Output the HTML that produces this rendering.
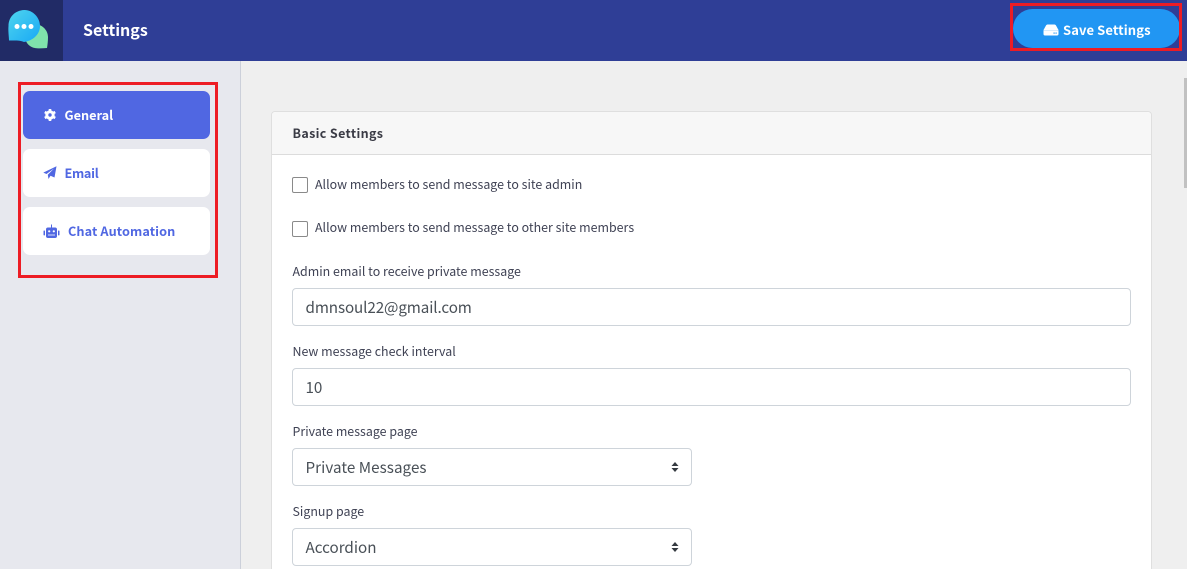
<!DOCTYPE html>
<html><head><meta charset="utf-8">
<style>
html,body{margin:0;padding:0;width:1187px;height:569px;overflow:hidden;background:#efefef;font-family:"DejaVu Sans","Liberation Sans",sans-serif;}
#p{position:relative;width:1187px;height:569px;overflow:hidden;background:#efefef;}
.a{position:absolute;white-space:nowrap;}
.t{font-family:"Noto Sans CJK JP","Liberation Sans",sans-serif;}
.lbl{font-size:12.4px;color:#3f4254;line-height:16px;letter-spacing:.02px;}
.inp{left:292px;height:36px;border:1px solid #ced4da;border-radius:4px;background:#fff;box-sizing:content-box;}
.val{left:305.500px;font-size:15.2px;color:#495057;line-height:20px;}
.nav{left:23px;width:187px;height:48px;border-radius:7px;background:#fff;}
.navt{font-size:12.7px;font-weight:700;color:#5067e2;line-height:18px;}
.cb{left:292px;width:14px;height:14px;border:1px solid #8a8a8a;border-radius:2px;background:#fff;}
.red{border:3px solid #ed1c24;box-sizing:border-box;}
</style></head><body><div id="p">
<div class="a" style="left:0;top:0;width:1187px;height:61px;background:#2f3e96"></div>
<div class="a" style="left:0;top:0;width:63px;height:61px;background:#212b66"></div>
<svg class="a" style="left:0;top:0" width="63" height="61" viewBox="0 0 63 61">
<defs><linearGradient id="g" x1="0" y1="0" x2="1" y2="1"><stop offset="0" stop-color="#4fd5ee"/><stop offset="1" stop-color="#18a8f5"/></linearGradient></defs>
<path d="M28 25C38 21 48 28 48 37C48 41 47.500 45 47 48C40 48.500 34 49 30 46C24 42 22 30 28 25Z" fill="#7fe3ac"/>
<path d="M24 10C32 9.500 40 17 40 26C40 35 32 41 24 42C20 40 14 40.500 9 40.500C9 37 8 31 8.500 26C8.500 17 15 10.500 24 10Z" fill="url(#g)"/>
<circle cx="17" cy="26.500" r="2.500" fill="#fff"/><circle cx="24" cy="26.500" r="2.500" fill="#fff"/><circle cx="31" cy="26.500" r="2.500" fill="#fff"/>
</svg>
<div class="a t" style="left:83px;top:19px;font-size:16px;font-weight:700;color:#fff;line-height:20px;">Settings</div>
<div class="a" style="left:1013px;top:9px;width:167px;height:39px;border-radius:20px;background:#2196f3"></div>
<div class="a red" style="left:1010px;top:3px;width:172px;height:48px;"></div>
<svg class="a" style="left:1043px;top:24px" width="16" height="12" viewBox="0 0 16 12">
<path d="M0.500 6L3 1.500C3.300 1 3.800 .5 4.500 .5H11.500C12.200 .5 12.700 1 13 1.500L15.500 6V10C15.500 11 15 11.500 14 11.500H2C1 11.500 .5 11 .5 10Z" fill="#fff"/>
<rect x="0.500" y="6" width="15" height="0.800" fill="#cfe6fb"/><rect x="10.500" y="8.500" width="1.200" height="1.200" fill="#2196f3"/><rect x="12.500" y="8.500" width="1.200" height="1.200" fill="#2196f3"/></svg>
<div class="a t" style="left:1063px;top:21px;font-size:13px;font-weight:700;color:#fff;line-height:18px;letter-spacing:.1px;">Save Settings</div>

<div class="a" style="left:0;top:61px;width:240px;height:508px;background:#e7e8ee;border-right:1px solid #ccd0da"></div>
<div class="a nav" style="top:91px;background:#5067e2"></div>
<div class="a nav" style="top:149px"></div>
<div class="a nav" style="top:207px"></div>
<div class="a red" style="left:18px;top:82px;width:200px;height:196px;"></div>

<svg class="a" style="left:43px;top:108px" width="14" height="14" viewBox="0 0 14 14">
<path d="M7 3.800A3.200 3.200 0 1 0 7 10.200A3.200 3.200 0 1 0 7 3.800Z" fill="none" stroke="#fff" stroke-width="3"/>
<path d="M7 1V3M7 11V13M1.800 4L3.500 5M10.500 9L12.200 10M1.800 10L3.500 9M10.500 5L12.200 4" stroke="#fff" stroke-width="2.600"/></svg>
<div class="a t navt" style="left:64.500px;top:106px;color:#fff">General</div>

<svg class="a" style="left:43px;top:166px" width="14" height="14" viewBox="0 0 14 14">
<path d="M13.500 .2L11.500 11.500L7.500 9.800L5.500 13L4.800 8.700L11 2.500L3.500 8L.3 6.600Z" fill="#5067e2"/></svg>
<div class="a t navt" style="left:64.500px;top:164px;letter-spacing:-.3px">Email</div>

<svg class="a" style="left:43px;top:224px" width="17" height="15" viewBox="0 0 17 15">
<rect x="3" y="3.500" width="11" height="10.500" rx="2" fill="#5067e2"/><rect x="8" y="0.500" width="1" height="3" fill="#5067e2"/>
<rect x="0.500" y="6.500" width="1.500" height="5" rx=".7" fill="#5067e2"/><rect x="15" y="6.500" width="1.500" height="5" rx=".7" fill="#5067e2"/>
<circle cx="6.200" cy="7.300" r="1.100" fill="#fff"/><circle cx="10.800" cy="7.300" r="1.100" fill="#fff"/>
<rect x="5" y="10.500" width="7" height="1" fill="#d8dcf8"/></svg>
<div class="a t navt" style="left:68px;top:222px;letter-spacing:.1px">Chat Automation</div>

<div class="a" style="left:271px;top:111px;width:879px;height:470px;background:#fff;border:1px solid #dfdfdf;border-radius:4px"></div>
<div class="a" style="left:272px;top:112px;width:879px;height:42px;background:#f7f7f7;border-bottom:1px solid #dcdcdc;border-radius:4px 4px 0 0"></div>
<div class="a t" style="left:292.500px;top:124px;font-size:12.500px;font-weight:700;color:#3a3b45;line-height:18px;letter-spacing:.35px">Basic Settings</div>

<div class="a cb" style="top:177px"></div>
<div class="a t lbl" style="left:315px;top:176px">Allow members to send message to site admin</div>
<div class="a cb" style="top:221px"></div>
<div class="a t lbl" style="left:315px;top:219px">Allow members to send message to other site members</div>

<div class="a t lbl" style="left:292.500px;top:263px">Admin email to receive private message</div>
<div class="a inp" style="top:288px;width:837px"></div>
<div class="a t val" style="top:297px;letter-spacing:-.1px">dmnsoul22@gmail.com</div>

<div class="a t lbl" style="left:292.500px;top:343px">New message check interval</div>
<div class="a inp" style="top:368px;width:837px"></div>
<div class="a t val" style="top:377px">10</div>

<div class="a t lbl" style="left:292.500px;top:423px">Private message page</div>
<div class="a inp" style="top:448px;width:398px"></div>
<div class="a t val" style="top:457px;letter-spacing:.05px">Private Messages</div>
<svg class="a" style="left:671px;top:462px" width="8" height="10" viewBox="0 0 8 10"><path d="M4 0L7.500 4H.5ZM4 10L.5 6H7.500Z" fill="#343a40"/></svg>

<div class="a t lbl" style="left:292.500px;top:503px">Signup page</div>
<div class="a inp" style="top:528px;width:398px"></div>
<div class="a t val" style="top:537px">Accordion</div>
<svg class="a" style="left:671px;top:542px" width="8" height="10" viewBox="0 0 8 10"><path d="M4 0L7.500 4H.5ZM4 10L.5 6H7.500Z" fill="#343a40"/></svg>

<div class="a" style="left:1184px;top:78px;width:3px;height:110px;background:#c1c1c1"></div>
</div></body></html>
